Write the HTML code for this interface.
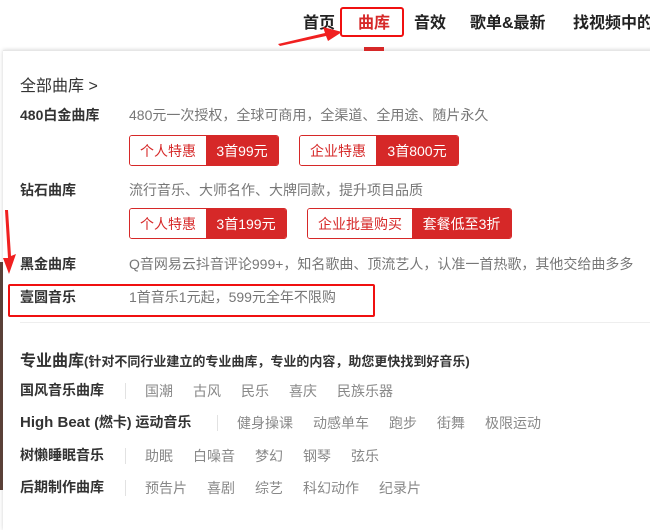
<!DOCTYPE html>
<html><head><meta charset="utf-8"><style>
*{margin:0;padding:0;box-sizing:border-box}
body{width:650px;height:515px;background:#fff;position:relative;overflow:hidden;font-family:"Liberation Sans","Noto Sans CJK SC",sans-serif;color:#333}
.a{position:absolute;white-space:nowrap}
.nav{font-size:16px;font-weight:bold;color:#222;top:9px}
.panel{position:absolute;left:3px;top:50px;width:660px;height:480px;background:#fff;box-shadow:0 0 4px rgba(0,0,0,.18);border-top:1px solid #e6e6e6}
.t{font-size:14px;font-weight:bold;color:#333}
.d{font-size:14px;color:#777}
.btn{position:absolute;height:31px;border:1px solid #d62828;border-radius:3px;display:flex;font-size:14px;overflow:hidden}
.btn span{display:flex;align-items:center;justify-content:center}
.btn .w{color:#d62828;background:#fff}
.btn .r{color:#fff;background:#d62828;flex:1}
.sep{position:absolute;width:1px;height:16px;background:#e2e2e2}
.i{font-size:14px;color:#888}
</style></head><body>
<div class="a nav" style="left:303px">首页</div>
<div class="a nav" style="left:358px;color:#d62828">曲库</div>
<div class="a nav" style="left:414px">音效</div>
<div class="a nav" style="left:470px">歌单&amp;最新</div>
<div class="a nav" style="left:573px">找视频中的</div>
<div class="a" style="left:340px;top:7px;width:64px;height:30px;border:2px solid #f01010;border-radius:3px"></div>
<div class="panel"></div>
<div class="a" style="left:0;top:262px;width:3px;height:228px;background:#5a4038"></div>
<div class="a" style="left:364px;top:47px;width:20px;height:4px;background:#d62828"></div>
<svg class="a" style="left:270px;top:24px" width="75" height="24"><polygon points="8,20 55,9 53,3 72,8 58,17 56,12 10,22" fill="#f02020"/></svg>
<svg class="a" style="left:0;top:208px" width="20" height="68"><polygon points="5,2 8,2 11,48 16,46 9,66 3,50 8,50" fill="#f02020"/></svg>

<div class="a" style="left:20px;top:72px;font-size:16px;color:#333">全部曲库 &gt;</div>
<div class="a t" style="left:20px;top:105px">480白金曲库</div>
<div class="a d" style="left:129px;top:105px">480元一次授权，全球可商用，全渠道、全用途、随片永久</div>
<div class="btn" style="left:129px;top:135px;width:150px"><span class="w" style="width:76px">个人特惠</span><span class="r">3首99元</span></div>
<div class="btn" style="left:299px;top:135px;width:160px"><span class="w" style="width:76px">企业特惠</span><span class="r">3首800元</span></div>
<div class="a t" style="left:20px;top:180px">钻石曲库</div>
<div class="a d" style="left:129px;top:180px">流行音乐、大师名作、大牌同款，提升项目品质</div>
<div class="btn" style="left:129px;top:208px;width:158px"><span class="w" style="width:76px">个人特惠</span><span class="r">3首199元</span></div>
<div class="btn" style="left:307px;top:208px;width:205px"><span class="w" style="width:104px">企业批量购买</span><span class="r">套餐低至3折</span></div>
<div class="a t" style="left:20px;top:254px">黑金曲库</div>
<div class="a d" style="left:129px;top:254px">Q音网易云抖音评论999+，知名歌曲、顶流艺人，认准一首热歌，其他交给曲多多</div>
<div class="a t" style="left:20px;top:287px">壹圆音乐</div>
<div class="a d" style="left:129px;top:287px">1首音乐1元起，599元全年不限购</div>
<div class="a" style="left:8px;top:284px;width:367px;height:33px;border:2px solid #f01010;border-radius:2px"></div>
<div class="a" style="left:20px;top:322px;width:640px;height:1px;background:#eee"></div>

<div class="a" style="left:20px;top:347px;font-size:16px;font-weight:bold;color:#333">专业曲库<span style="font-size:13px">(针对不同行业建立的专业曲库，专业的内容，助您更快找到好音乐)</span></div>
<div class="a t" style="left:20px;top:380px">国风音乐曲库</div>
<div class="sep" style="left:125px;top:383px"></div>
<div class="a i" style="left:145px;top:381px">国潮</div><div class="a i" style="left:193px;top:381px">古风</div><div class="a i" style="left:241px;top:381px">民乐</div><div class="a i" style="left:289px;top:381px">喜庆</div><div class="a i" style="left:337px;top:381px">民族乐器</div>
<div class="a t" style="left:20px;top:412px;font-size:15px">High Beat <span style="font-size:14px">(燃卡) 运动音乐</span></div>
<div class="sep" style="left:217px;top:415px"></div>
<div class="a i" style="left:237px;top:413px">健身操课</div><div class="a i" style="left:313px;top:413px">动感单车</div><div class="a i" style="left:389px;top:413px">跑步</div><div class="a i" style="left:437px;top:413px">街舞</div><div class="a i" style="left:485px;top:413px">极限运动</div>
<div class="a t" style="left:20px;top:445px">树懒睡眠音乐</div>
<div class="sep" style="left:125px;top:448px"></div>
<div class="a i" style="left:145px;top:446px">助眠</div><div class="a i" style="left:193px;top:446px">白噪音</div><div class="a i" style="left:255px;top:446px">梦幻</div><div class="a i" style="left:303px;top:446px">钢琴</div><div class="a i" style="left:351px;top:446px">弦乐</div>
<div class="a t" style="left:20px;top:477px">后期制作曲库</div>
<div class="sep" style="left:125px;top:480px"></div>
<div class="a i" style="left:145px;top:478px">预告片</div><div class="a i" style="left:207px;top:478px">喜剧</div><div class="a i" style="left:255px;top:478px">综艺</div><div class="a i" style="left:303px;top:478px">科幻动作</div><div class="a i" style="left:379px;top:478px">纪录片</div>
</body></html>
